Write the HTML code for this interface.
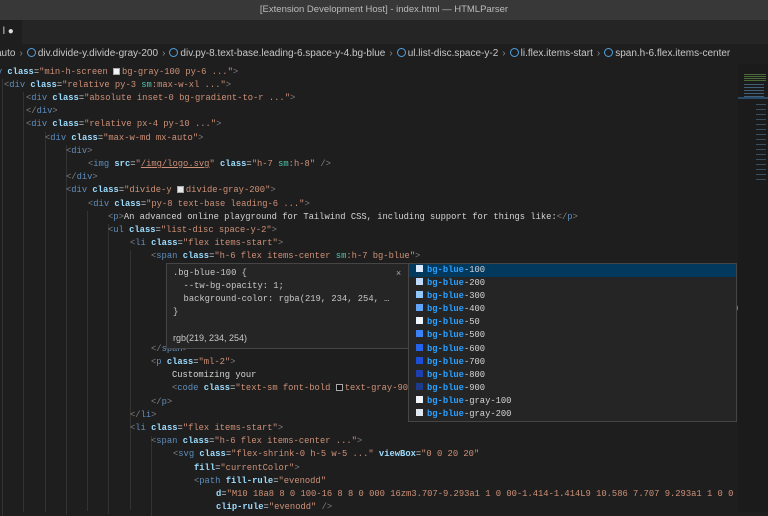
<!DOCTYPE html>
<html><head><meta charset="utf-8"><style>
*{margin:0;padding:0;box-sizing:border-box}
body{width:768px;height:512px;overflow:hidden;background:#1e1e1e;font-family:"Liberation Sans",sans-serif;position:relative}
.title{position:absolute;left:0;top:0;width:768px;height:20px;background:#383838;color:#bbb;font-size:9.5px;text-align:center;line-height:20px}
.tabs{position:absolute;left:0;top:20px;width:768px;height:24px;background:#252526}
.tab{position:absolute;left:0;top:0;width:22px;height:24px;background:#1e1e1e;color:#ddd;font-size:10px;line-height:24px}
.crumb{position:absolute;left:0;top:44px;width:768px;height:20px;color:#c8c8c8;font-size:10px;line-height:20px;white-space:nowrap;left:-4px}
.crumb i{font-style:normal;color:#888;margin:0 4px}
.crumb b{display:inline-block;width:9px;height:9px;border:1.3px solid #4fa3e0;border-radius:50%;vertical-align:-1px;margin-right:2px;font-weight:normal}
.code{position:absolute;left:0;top:65.5px;width:738px;height:450px;font-family:"Liberation Mono",monospace;font-size:8.8px;overflow:hidden}
.l{position:absolute;height:13.2px;line-height:13.2px;white-space:pre;color:#d4d4d4}
.t{color:#5e8fbf}.p{color:#808080}.a{color:#9cdcfe;font-weight:bold}.s{color:#ce9178}.g{color:#4ec9b0}
.sw{display:inline-block;width:7px;height:7px;border:1px solid #aaa;vertical-align:-1px;margin-right:2px}
.mini{position:absolute;left:738px;top:64px;width:30px;height:448px;background:#1b1b1b}
.hover{position:absolute;left:166px;top:263px;width:243px;height:86px;background:#252526;border:1px solid #454545;font-family:"Liberation Mono",monospace;font-size:8.8px;color:#c8c8c8}
.hover div{position:absolute;left:6px;white-space:pre;line-height:13px}
.sug{position:absolute;left:408px;top:263px;width:329px;height:159px;background:#252526;border:1px solid #454545;font-family:"Liberation Mono",monospace;font-size:8.8px}
.r{height:13.1px;line-height:13.1px;padding-left:7px;color:#d4d4d4;white-space:pre}
.r.sel{background:#04395e}
.r span.q{display:inline-block;width:7px;height:7px;margin-right:4px;vertical-align:0}
.r b{color:#2aa1ff}
.guide{position:absolute;width:1px;background:#333}
</style></head><body>
<div class="title">[Extension Development Host] - index.html — HTMLParser</div>
<div class="tabs"><div class="tab">&nbsp;l ●</div></div>
<div class="crumb">auto<i>›</i><b></b>div.divide-y.divide-gray-200<i>›</i><b></b>div.py-8.text-base.leading-6.space-y-4.bg-blue<i>›</i><b></b>ul.list-disc.space-y-2<i>›</i><b></b>li.flex.items-start<i>›</i><b></b>span.h-6.flex.items-center</div>
<div class="code">
<div class="guide" style="left:2px;top:13px;height:440px"></div>
<div class="guide" style="left:23px;top:26px;height:420px"></div>
<div class="guide" style="left:45px;top:66px;height:380px"></div>
<div class="guide" style="left:66px;top:79px;height:370px"></div>
<div class="guide" style="left:87px;top:145px;height:300px"></div>
<div class="guide" style="left:108px;top:158px;height:290px"></div>
<div class="guide" style="left:130px;top:184px;height:260px"></div>
<div class="guide" style="left:151px;top:370px;height:80px"></div>
<div class="l" style="top:0;left:-19px"><span class="p">&lt;</span><span class="t">div</span> <span class="a">class</span>=<span class="s">"min-h-screen <span class="sw" style="background:#f3f4f6"></span>bg-gray-100 py-6 ..."</span><span class="p">&gt;</span></div>
<div class="l" style="top:13.2px;left:4px"><span class="p">&lt;</span><span class="t">div</span> <span class="a">class</span>=<span class="s">"relative py-3 <span class="g">sm</span>:max-w-xl ..."</span><span class="p">&gt;</span></div>
<div class="l" style="top:26.4px;left:26px"><span class="p">&lt;</span><span class="t">div</span> <span class="a">class</span>=<span class="s">"absolute inset-0 bg-gradient-to-r ..."</span><span class="p">&gt;</span></div>
<div class="l" style="top:39.6px;left:26px"><span class="p">&lt;/</span><span class="t">div</span><span class="p">&gt;</span></div>
<div class="l" style="top:52.8px;left:26px"><span class="p">&lt;</span><span class="t">div</span> <span class="a">class</span>=<span class="s">"relative px-4 py-10 ..."</span><span class="p">&gt;</span></div>
<div class="l" style="top:66px;left:45px"><span class="p">&lt;</span><span class="t">div</span> <span class="a">class</span>=<span class="s">"max-w-md mx-auto"</span><span class="p">&gt;</span></div>
<div class="l" style="top:79.2px;left:66px"><span class="p">&lt;</span><span class="t">div</span><span class="p">&gt;</span></div>
<div class="l" style="top:92.4px;left:88px"><span class="p">&lt;</span><span class="t">img</span> <span class="a">src</span>=<span class="s">"<u>/img/logo.svg</u>"</span> <span class="a">class</span>=<span class="s">"h-7 <span class="g">sm</span>:h-8"</span> <span class="p">/&gt;</span></div>
<div class="l" style="top:105.6px;left:66px"><span class="p">&lt;/</span><span class="t">div</span><span class="p">&gt;</span></div>
<div class="l" style="top:118.8px;left:66px"><span class="p">&lt;</span><span class="t">div</span> <span class="a">class</span>=<span class="s">"divide-y <span class="sw" style="background:#e5e7eb"></span>divide-gray-200"</span><span class="p">&gt;</span></div>
<div class="l" style="top:132px;left:88px"><span class="p">&lt;</span><span class="t">div</span> <span class="a">class</span>=<span class="s">"py-8 text-base leading-6 ..."</span><span class="p">&gt;</span></div>
<div class="l" style="top:145.2px;left:108px"><span class="p">&lt;</span><span class="t">p</span><span class="p">&gt;</span>An advanced online playground for Tailwind CSS, including support for things like:<span class="p">&lt;/</span><span class="t">p</span><span class="p">&gt;</span></div>
<div class="l" style="top:158.4px;left:108px"><span class="p">&lt;</span><span class="t">ul</span> <span class="a">class</span>=<span class="s">"list-disc space-y-2"</span><span class="p">&gt;</span></div>
<div class="l" style="top:171.6px;left:130px"><span class="p">&lt;</span><span class="t">li</span> <span class="a">class</span>=<span class="s">"flex items-start"</span><span class="p">&gt;</span></div>
<div class="l" style="top:184.8px;left:151px"><span class="p">&lt;</span><span class="t">span</span> <span class="a">class</span>=<span class="s">"h-6 flex items-center <span class="g">sm</span>:h-7 bg-blue"</span><span class="p">&gt;</span></div>
<div class="l" style="top:237.6px;left:733px"><span class="s">00</span></div>
<div class="l" style="top:277.2px;left:151px"><span class="p">&lt;/</span><span class="t">span</span><span class="p">&gt;</span></div>
<div class="l" style="top:290.4px;left:151px"><span class="p">&lt;</span><span class="t">p</span> <span class="a">class</span>=<span class="s">"ml-2"</span><span class="p">&gt;</span></div>
<div class="l" style="top:303.6px;left:172px">Customizing your</div>
<div class="l" style="top:316.8px;left:172px"><span class="p">&lt;</span><span class="t">code</span> <span class="a">class</span>=<span class="s">"text-sm font-bold <span class="sw" style="background:#111"></span>text-gray-900"</span></div>
<div class="l" style="top:330px;left:151px"><span class="p">&lt;/</span><span class="t">p</span><span class="p">&gt;</span></div>
<div class="l" style="top:343.2px;left:130px"><span class="p">&lt;/</span><span class="t">li</span><span class="p">&gt;</span></div>
<div class="l" style="top:356.4px;left:130px"><span class="p">&lt;</span><span class="t">li</span> <span class="a">class</span>=<span class="s">"flex items-start"</span><span class="p">&gt;</span></div>
<div class="l" style="top:369.6px;left:151px"><span class="p">&lt;</span><span class="t">span</span> <span class="a">class</span>=<span class="s">"h-6 flex items-center ..."</span><span class="p">&gt;</span></div>
<div class="l" style="top:382.8px;left:173px"><span class="p">&lt;</span><span class="t">svg</span> <span class="a">class</span>=<span class="s">"flex-shrink-0 h-5 w-5 ..."</span> <span class="a">viewBox</span>=<span class="s">"0 0 20 20"</span></div>
<div class="l" style="top:396px;left:194px"><span class="a">fill</span>=<span class="s">"currentColor"</span><span class="p">&gt;</span></div>
<div class="l" style="top:409.2px;left:194px"><span class="p">&lt;</span><span class="t">path</span> <span class="a">fill-rule</span>=<span class="s">"evenodd"</span></div>
<div class="l" style="top:422.4px;left:216px"><span class="a">d</span>=<span class="s">"M10 18a8 8 0 100-16 8 8 0 000 16zm3.707-9.293a1 1 0 00-1.414-1.414L9 10.586 7.707 9.293a1 1 0 0 00</span></div>
<div class="l" style="top:435.6px;left:216px"><span class="a">clip-rule</span>=<span class="s">"evenodd"</span> <span class="p">/&gt;</span></div>
</div>
<div class="mini">
<div style="position:absolute;left:6px;top:10px;width:22px;height:8px;background:repeating-linear-gradient(#4a6a3a 0 1px,transparent 1px 2px)"></div>
<div style="position:absolute;left:6px;top:20px;width:20px;height:14px;background:repeating-linear-gradient(#40607a 0 1px,transparent 1px 3px)"></div>
<div style="position:absolute;left:0;top:33px;width:30px;height:2px;background:#2a4a6a"></div>
<div style="position:absolute;left:18px;top:40px;width:10px;height:80px;background:repeating-linear-gradient(#3a5060 0 1px,transparent 1px 5px)"></div>
</div>
<div class="hover">
<div style="top:3px">.bg-blue-100 {</div>
<div style="top:16px">  --tw-bg-opacity: 1;</div>
<div style="top:29px">  background-color: rgba(219, 234, 254, …</div>
<div style="top:42px">}</div>
<div style="top:68px;font-family:'Liberation Sans',sans-serif;font-size:9px">rgb(219, 234, 254)</div>
<div style="top:3px;left:229px;font-family:'Liberation Sans',sans-serif;color:#aaa">×</div>
</div>
<div class="sug">
<div class="r sel"><span class="q" style="background:#dbeafe"></span><b>bg-blue</b>-100</div>
<div class="r"><span class="q" style="background:#bfdbfe"></span><b>bg-blue</b>-200</div>
<div class="r"><span class="q" style="background:#93c5fd"></span><b>bg-blue</b>-300</div>
<div class="r"><span class="q" style="background:#60a5fa"></span><b>bg-blue</b>-400</div>
<div class="r"><span class="q" style="background:#eff6ff"></span><b>bg-blue</b>-50</div>
<div class="r"><span class="q" style="background:#3b82f6"></span><b>bg-blue</b>-500</div>
<div class="r"><span class="q" style="background:#2563eb"></span><b>bg-blue</b>-600</div>
<div class="r"><span class="q" style="background:#1d4ed8"></span><b>bg-blue</b>-700</div>
<div class="r"><span class="q" style="background:#1e40af"></span><b>bg-blue</b>-800</div>
<div class="r"><span class="q" style="background:#1e3a8a"></span><b>bg-blue</b>-900</div>
<div class="r"><span class="q" style="background:#f1f5f9"></span><b>bg-blue</b>-gray-100</div>
<div class="r"><span class="q" style="background:#e2e8f0"></span><b>bg-blue</b>-gray-200</div>
</div>
</body></html>
